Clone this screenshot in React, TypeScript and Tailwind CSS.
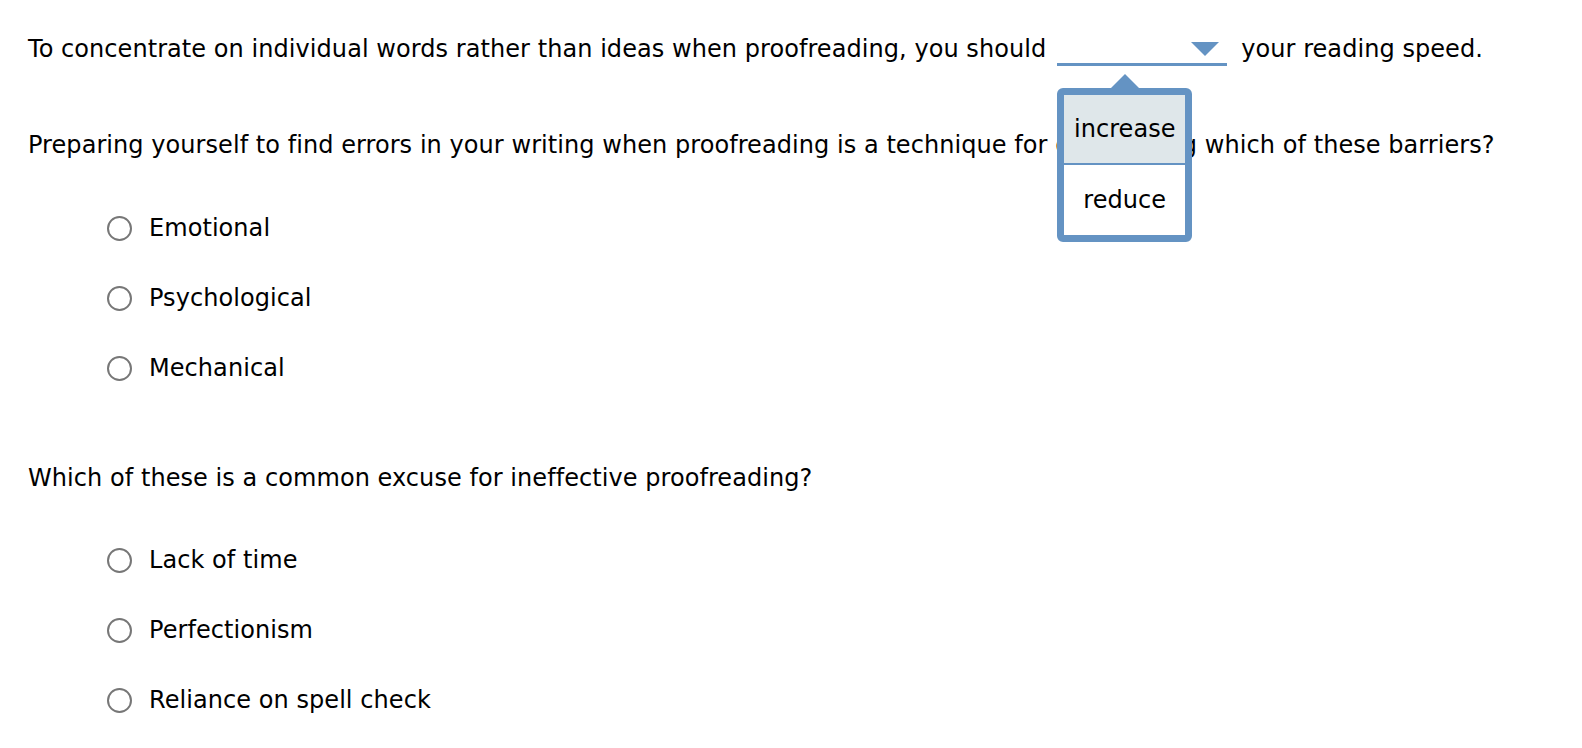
import React from "react";

function Radio({ label }: { label: string }) {
  return (
    <div className="flex items-center h-[30px] ml-[79px]">
      <span className="w-[25px] h-[25px] rounded-full border-2 border-[#777777] bg-white shrink-0" />
      <span className="ml-[17px] leading-[30px]">{label}</span>
    </div>
  );
}

export default function App() {
  return (
    <div
      className="bg-white w-[1582px] h-[748px] overflow-hidden text-[24px] text-black tracking-[0.06px] pl-[28px]"
      style={{ fontFamily: '"DejaVu Sans", Verdana, sans-serif' }}
    >
      <div className="flex items-start mt-[34px] h-[32px] whitespace-nowrap">
        <span className="leading-[30px]">
          To concentrate on individual words rather than ideas when proofreading, you should
        </span>
        <div className="relative ml-[11px] mr-[14px] w-[170px] h-[32px] border-b-[3px] border-[#6493c3] z-10 shrink-0">
          <svg className="absolute right-[8px] top-[8px]" width="28" height="14" viewBox="0 0 28 14">
            <polygon points="0,0 28,0 14,14" fill="#6493c3" />
          </svg>
          <div className="absolute left-0 top-[40px] w-[135px]">
            <svg className="block mx-auto" width="28" height="14" viewBox="0 0 28 14">
              <polygon points="0,14 14,0 28,14" fill="#6493c3" />
            </svg>
            <div className="w-[135px] h-[154px] border-[7px] border-[#6493c3] rounded-[6px] bg-white overflow-hidden flex flex-col">
              <div className="h-[70px] bg-[#dfe7ea] border-b-2 border-[#6493c3] flex items-center justify-center leading-[30px]">
                increase
              </div>
              <div className="flex-1 flex items-center justify-center leading-[30px]">reduce</div>
            </div>
          </div>
        </div>
        <span className="leading-[30px]">your reading speed.</span>
      </div>

      <div className="mt-[64px] leading-[30px] h-[30px] whitespace-nowrap">
        Preparing yourself to find errors in your writing when proofreading is a technique for overcoming which of these barriers?
      </div>

      <div className="mt-[53px] flex flex-col gap-[40px]">
        <Radio label="Emotional" />
        <Radio label="Psychological" />
        <Radio label="Mechanical" />
      </div>

      <div className="mt-[80px] leading-[30px] h-[30px] whitespace-nowrap">
        Which of these is a common excuse for ineffective proofreading?
      </div>

      <div className="mt-[52px] flex flex-col gap-[40px]">
        <Radio label="Lack of time" />
        <Radio label="Perfectionism" />
        <Radio label="Reliance on spell check" />
      </div>
    </div>
  );
}
